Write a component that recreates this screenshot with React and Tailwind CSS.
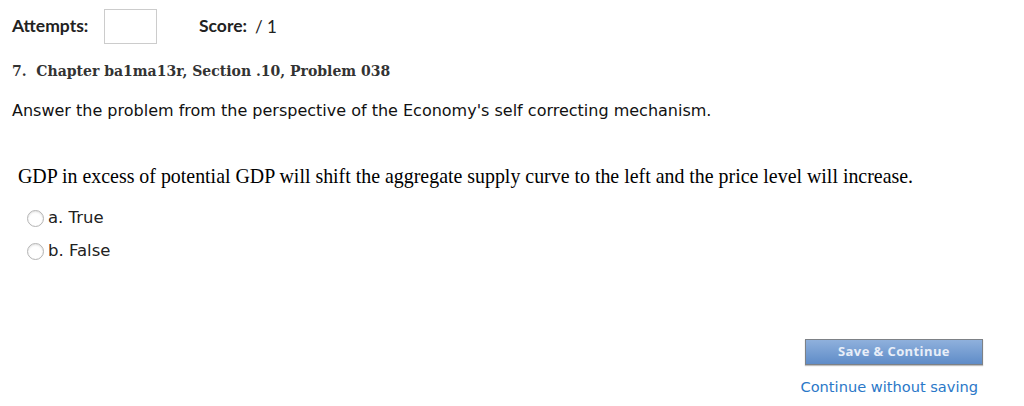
import React from 'react';

const Radio = ({ label }) => (
  <label className="flex items-center h-[33px]">
    <span className="w-[17px] h-[17px] rounded-full border border-[#b4b4b4] bg-white shadow-[inset_0_1px_2px_rgba(0,0,0,0.12)]" />
    <span className="ml-[4px] text-[16.5px] text-[#222]" style={{ fontFamily: '"DejaVu Sans", Verdana, sans-serif' }}>{label}</span>
  </label>
);

export default function App() {
  return (
    <div className="w-[1024px] h-[406px] bg-white text-black relative">
      {/* Header */}
      <div className="flex items-center pt-[9px] pl-[12px]" style={{ fontFamily: 'Lato, "Open Sans", sans-serif' }}>
        <span className="font-bold text-[17.5px] text-[#222] w-[92px]">Attempts:</span>
        <div className="w-[53px] h-[35px] border border-[#cccccc] bg-white" />
        <span className="font-bold text-[17.5px] text-[#222] ml-[42px]">Score:</span>
        <span className="text-[17px] text-[#222] ml-[8px]">/ 1</span>
      </div>

      <h2 className="mt-[17px] pl-[12px] font-bold text-[14px] text-[#333]" style={{ fontFamily: '"DejaVu Serif", "Liberation Serif", serif' }}>
        7.&nbsp; Chapter ba1ma13r, Section .10, Problem 038
      </h2>

      <p className="mt-[17px] pl-[12px] text-[16px] text-[#111]" style={{ fontFamily: '"DejaVu Sans", Verdana, sans-serif' }}>
        Answer the problem from the perspective of the Economy's self correcting mechanism.
      </p>

      <p className="mt-[39px] pl-[18px] text-[19.9px] text-black" style={{ fontFamily: '"Liberation Serif", "Times New Roman", serif' }}>
        GDP in excess of potential GDP will shift the aggregate supply curve to the left and the price level will increase.
      </p>

      <div className="mt-[10px] pl-[27px] flex flex-col">
        <Radio label="a. True" />
        <Radio label="b. False" />
      </div>

      {/* Actions */}
      <div className="absolute right-[41px] top-[339px] flex flex-col items-end">
        <button
          className="w-[178px] h-[26px] border border-[#7d8186] bg-gradient-to-b from-[#8fb0dc] to-[#5f8cc8] text-[#e8eef8] font-bold text-[13px] tracking-[0.4px] shadow-[0_1px_1px_rgba(0,0,0,0.25)]"
          style={{ fontFamily: '"Open Sans", "DejaVu Sans", sans-serif' }}
        >
          Save &amp; Continue
        </button>
        <a className="mt-[11px] mr-[5px] text-[14.6px] text-[#2a78c8]" style={{ fontFamily: '"DejaVu Sans", Verdana, sans-serif' }}>
          Continue without saving
        </a>
      </div>
    </div>
  );
}
